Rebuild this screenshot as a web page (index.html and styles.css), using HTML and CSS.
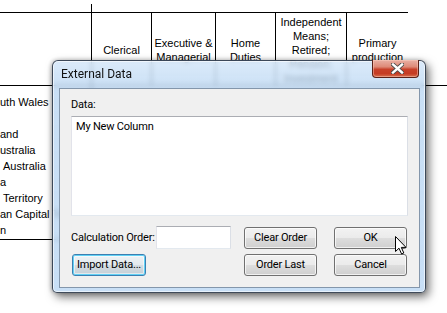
FILE: index.html
```html
<!DOCTYPE html>
<html>
<head>
<meta charset="utf-8">
<link rel="stylesheet" href="styles.css">
</head>
<body>
<div class="sheet">
  <div class="strip"><div class="strip-cell"></div></div>
  <div class="head">
    <div class="hc"></div>
    <div class="hc">Clerical</div>
    <div class="hc">Executive &amp;<br>Managerial</div>
    <div class="hc">Home<br>Duties</div>
    <div class="hc">Independent<br>Means;<br>Retired;<br>Pension;<br>Investment</div>
    <div class="hc last">Primary<br>production</div>
    <div class="fill"></div>
  </div>
  <div class="rows">
    <div class="labels">
      <div>uth Wales</div>
      <div>&nbsp;</div>
      <div>and</div>
      <div>ustralia</div>
      <div class="ind">Australia</div>
      <div>a</div>
      <div class="ind">Territory</div>
      <div>an Capital Territory</div>
      <div>n</div>
    </div>
  </div>
</div>

<div class="dialog">
  <div class="titlebar">
    <span class="title">External Data</span>
    <div class="close">
      <svg width="13" height="11" viewBox="0 0 13 11">
        <path d="M2 1.5 L11 9.5 M11 1.5 L2 9.5" stroke="#4a4a4a" stroke-width="4.2" stroke-linecap="square"/>
        <path d="M2 1.5 L11 9.5 M11 1.5 L2 9.5" stroke="#ffffff" stroke-width="2.4" stroke-linecap="square"/>
      </svg>
    </div>
  </div>
  <div class="client">
    <div class="lbl">Data:</div>
    <textarea class="data">My New Column</textarea>
    <div class="controls">
      <span class="calc">Calculation Order:</span>
      <input class="order" type="text">
      <button class="btn">Clear Order</button>
      <button class="btn">OK</button>
      <button class="btn import">Import Data...</button>
      <button class="btn c4">Order Last</button>
      <button class="btn c6">Cancel</button>
    </div>
  </div>
</div>

<svg class="cursor" width="13" height="19" viewBox="0 0 13 19">
  <path d="M0.5 0.5 L0.5 15.5 L4 12.2 L6.6 18 L8.8 17 L6.3 11.4 L11 11.4 Z" fill="#ffffff" stroke="#000000" stroke-width="1" stroke-linejoin="miter"/>
</svg>
</body>
</html>
```
FILE: styles.css
```css
html, body {
  margin: 0;
  padding: 0;
  background: #ffffff;
  width: 447px;
  height: 313px;
  overflow: hidden;
}

.sheet {
  padding-top: 4px;
  font-family: "Liberation Sans", Arial, sans-serif;
  font-size: 11px;
  color: #000;
}

.strip {
  height: 8px;
}
.strip-cell {
  width: 92px;
  height: 8px;
  box-sizing: border-box;
  border-right: 1px solid #000;
}

.head {
  display: grid;
  grid-template-columns: 92px 60px 64px 60px 71px 61px 1fr;
  height: 74px;
  box-sizing: border-box;
  border-bottom: 1px solid #000;
}
.hc {
  box-sizing: border-box;
  border-top: 1px solid #000;
  border-right: 1px solid #000;
  display: flex;
  align-items: center;
  justify-content: center;
  text-align: center;
  line-height: 14px;
  padding-top: 2px;
}
.hc.last {
  border-right: none;
}

.rows {
  display: grid;
  grid-template-columns: 92px;
}
.labels {
  box-sizing: border-box;
  border-right: 1px solid #000;
  border-bottom: 1px solid #000;
  padding: 8px 0 1px 0;
  line-height: 16px;
  white-space: nowrap;
  overflow: hidden;
}
.labels .ind {
  padding-left: 3px;
}

/* dialog */
.dialog {
  position: absolute;
  left: 52px;
  top: 60px;
  width: 374px;
  height: 233px;
  box-sizing: border-box;
  border: 1px solid rgba(25, 35, 50, 0.8);
  border-radius: 6px 6px 5px 5px;
  background: linear-gradient(180deg, rgba(208, 228, 248, 0.78) 0px, rgba(184, 213, 242, 0.76) 30px, rgba(188, 216, 244, 0.82) 100%);
  -webkit-backdrop-filter: blur(2.5px);
  backdrop-filter: blur(2.5px);
  box-shadow: inset 0 0 0 1px rgba(255, 255, 255, 0.6), 3px 4px 10px rgba(0, 0, 0, 0.55), -1px 0 4px rgba(0, 0, 0, 0.25);
  display: flex;
  flex-direction: column;
  padding: 0 5px 4px 6px;
  font-family: Roboto, "Noto Sans", sans-serif;
  font-size: 11px;
  letter-spacing: -0.2px;
  color: #000;
}

.titlebar {
  height: 27px;
  display: flex;
  align-items: flex-start;
  flex-shrink: 0;
}
.title {
  margin-left: 2px;
  margin-top: 5px;
  font-size: 12px;
  letter-spacing: 0;
  line-height: 16px;
  color: #111;
}
.close {
  margin-left: auto;
  margin-right: 1px;
  margin-top: -1px;
  width: 47px;
  height: 18px;
  box-sizing: border-box;
  border: 1px solid #5b2118;
  border-top: none;
  border-radius: 0 0 4px 4px;
  background: linear-gradient(180deg, #e9b0a4 0%, #de8a78 40%, #c8412a 55%, #c53c24 80%, #d7704f 100%);
  box-shadow: inset 0 0 0 1px rgba(255, 210, 195, 0.45);
  display: flex;
  align-items: center;
  justify-content: center;
}
.close svg {
  display: block;
  margin-left: 3px;
}

.client {
  flex: 1;
  background: #f0f0f0;
  border: 1px solid #8396ab;
  padding: 8px 11px 0 11px;
  display: flex;
  flex-direction: column;
}

.lbl {
  line-height: 16px;
}

.data {
  margin: 3px 0 0 0;
  height: 100px;
  box-sizing: border-box;
  resize: none;
  border: 1px solid;
  border-color: #abadb3 #dbdfe6 #e3e9ef #e2e3ea;
  background: #fff;
  padding: 2px 4px;
  font-family: Roboto, "Noto Sans", sans-serif;
  font-size: 11px;
  letter-spacing: -0.2px;
  line-height: 16px;
  color: #000;
  outline: none;
  overflow: hidden;
}

.controls {
  margin-top: 10px;
  display: grid;
  grid-template-columns: 85px 75px 13px 73px 17px 73px;
  grid-template-rows: 23px 22px;
  row-gap: 5px;
  align-items: end;
}

.calc {
  grid-column: 1;
  grid-row: 1;
  align-self: center;
  white-space: nowrap;
  line-height: 16px;
}
.order {
  grid-column: 2;
  grid-row: 1;
  height: 23px;
  width: 75px;
  box-sizing: border-box;
  margin: 0;
  border: 1px solid;
  border-color: #abadb3 #dbdfe6 #e3e9ef #e2e3ea;
  background: #fff;
  padding: 0 3px;
  outline: none;
}

.btn {
  grid-row: 1;
  height: 22px;
  width: 73px;
  box-sizing: border-box;
  margin: 0;
  padding: 0;
  border: 1px solid #707070;
  border-radius: 3px;
  background: linear-gradient(180deg, #f2f2f2 0%, #ebebeb 48%, #dddddd 52%, #cfcfcf 100%);
  box-shadow: inset 0 0 0 1px rgba(255, 255, 255, 0.7);
  font-family: Roboto, "Noto Sans", sans-serif;
  font-size: 11px;
  letter-spacing: -0.2px;
  line-height: 16px;
  white-space: nowrap;
  color: #000;
  text-align: center;
}
.controls .btn:nth-of-type(1) { grid-column: 4; }
.controls .btn:nth-of-type(2) { grid-column: 6; }

.btn.import {
  grid-row: 2;
  grid-column: 1;
  width: 74px;
  margin-left: 1px;
  border-color: #3c7fb1;
  box-shadow: inset 0 0 0 1px #61d1f5, inset 0 0 0 2px rgba(255, 255, 255, 0.5);
  background: linear-gradient(180deg, #eef3f6 0%, #e3e9ed 48%, #d3dce2 52%, #c5cfd6 100%);
}
.btn.c4 {
  grid-row: 2;
  grid-column: 4;
}
.btn.c6 {
  grid-row: 2;
  grid-column: 6;
}

.cursor {
  position: absolute;
  left: 395px;
  top: 236px;
}
```
